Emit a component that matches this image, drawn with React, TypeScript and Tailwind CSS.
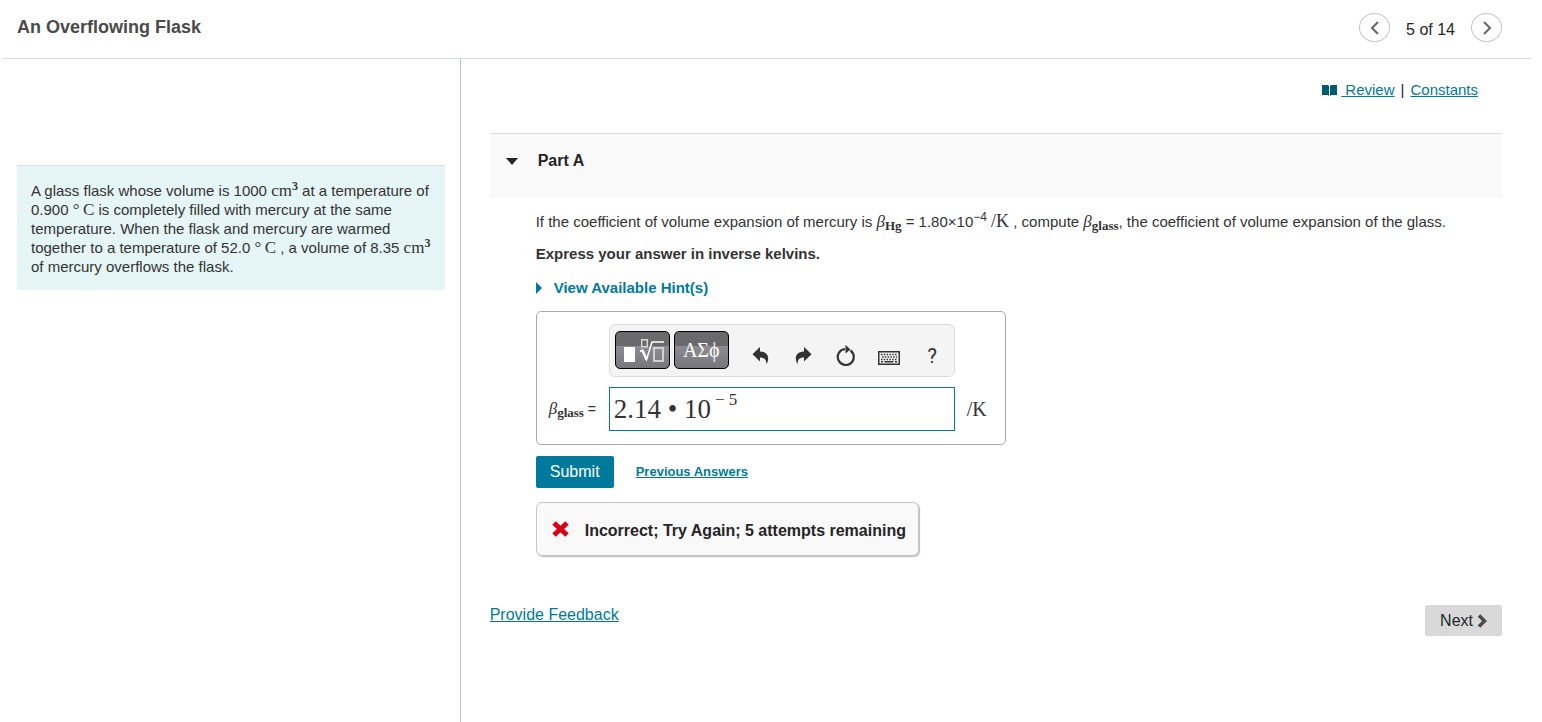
import React, { useState } from 'react'

const link = 'text-[#007a9c] underline'
const math = 'font-["Liberation_Serif",serif] leading-none'

function Unit({ children, sup }: { children: React.ReactNode; sup?: string }) {
  return (
    <span className={`${math} text-[17px] whitespace-nowrap`}>
      {children}
      {sup && <sup className="text-xs leading-none font-bold">{sup}</sup>}
    </span>
  )
}

function Beta({ sub }: { sub: string }) {
  return (
    <span className={`${math} text-[17px] whitespace-nowrap`}>
      <i>β</i>
      <sub className="text-[13px] leading-none font-bold">{sub}</sub>
    </span>
  )
}

function ToolButton({ label, children }: { label: string; children: React.ReactNode }) {
  return (
    <button type="button" aria-label={label} className="flex h-8 w-[43px] items-center justify-center text-[#333]">
      {children}
    </button>
  )
}

function Header() {
  const round = 'flex h-[29px] w-[31px] items-center justify-center rounded-[50%] border border-[#c7c7c7] text-[#666]'
  return (
    <header className="flex h-[59px] items-start justify-between border-b border-[#dcdcdc] pr-[29px] pl-[15px]">
      <h1 className="pt-[15px] text-lg leading-6 font-bold text-[#4a4a4a]">An Overflowing Flask</h1>
      <nav className="flex items-start pt-[13px] text-base text-[#252525]">
        <button type="button" aria-label="Previous item" className={round}>
          <svg width="10" height="14" viewBox="0 0 10 14" fill="none" stroke="currentColor" strokeWidth="2">
            <path d="M8 1 2 7l6 6" />
          </svg>
        </button>
        <span className="px-4 pt-[5px] leading-6">5 of 14</span>
        <button type="button" aria-label="Next item" className={round}>
          <svg width="10" height="14" viewBox="0 0 10 14" fill="none" stroke="currentColor" strokeWidth="2">
            <path d="m2 1 6 6-6 6" />
          </svg>
        </button>
      </nav>
    </header>
  )
}

function Problem() {
  return (
    <aside className="w-[30%] shrink-0 border-r border-[#b3c6d9] px-[15px] pt-[106px]">
      <div className="border-t border-[#dcdcdc] bg-[#e6f6f6] pt-[15px] pr-2 pb-[14px] pl-[14px] text-[15px] leading-[19px] text-[#333]">
        A glass flask whose volume is 1000 <Unit sup="3">cm</Unit> at a temperature of 0.900{' '}
        <Unit>°&thinsp;C</Unit> is completely filled with mercury at the same temperature. When the flask and mercury
        are warmed together to a temperature of 52.0 <Unit>°&thinsp;C</Unit> , a volume of 8.35{' '}
        <Unit sup="3">cm</Unit> of mercury overflows the flask.
      </div>
    </aside>
  )
}

function Toolbar() {
  const dark =
    'flex h-[38px] w-[55px] shrink-0 items-center justify-center rounded-[5px] border border-black bg-linear-to-b from-[#6a6a6c] from-40% via-[#8c8b93] via-40% to-[#77777c] text-white'
  return (
    <div className="flex h-[53px] items-start rounded-md border border-[#dcdcdc] bg-[#f4f4f4] px-[5px] pt-[6px]">
      <button type="button" aria-label="Templates" className={dark}>
        <svg width="44" height="26" viewBox="0 0 44 26" fill="none" stroke="#fff" className="shrink-0">
          <rect x="4" y="10" width="11" height="15" fill="#fff" stroke="none" />
          <rect x="21.750" y="2.750" width="5.500" height="7" stroke="#ddd" strokeWidth="1.400" />
          <path d="m20 14.500 2.500-1.500 4 9.500 5.500-17.500h13" strokeWidth="1.500" />
          <path d="m22.500 13.500 4 9" strokeWidth="2.400" />
          <rect x="34" y="11" width="9" height="13" stroke="#ddd" strokeWidth="1.700" />
        </svg>
      </button>
      <button type="button" aria-label="Symbols" className={`${dark} ml-1 ${math} text-xl`}>
        ΑΣϕ
      </button>
      <div className="flex pt-[9px] pl-[10px]">
        <ToolButton label="Undo">
          <svg width="17" height="18" viewBox="0 0 16 18" fill="currentColor">
            <path d="M7.500 0v4.500c6 0 9 4 8 8.500-.2 1.600-.8 3-1.700 4 .3-4-1.300-6.500-6.300-6.500v4L0 7.300z" />
          </svg>
        </ToolButton>
        <ToolButton label="Redo">
          <svg width="17" height="18" viewBox="0 0 16 18" fill="currentColor">
            <path d="M8.500 0v4.500c-6 0-9 4-8 8.500.2 1.600.8 3 1.700 4-.3-4 1.300-6.500 6.300-6.500v4L16 7.300z" />
          </svg>
        </ToolButton>
        <ToolButton label="Reset">
          <svg width="20" height="22" viewBox="0 0 20 22" fill="none" stroke="currentColor" strokeWidth="2.200">
            <path d="M14.500 5.500A8 8 0 1 1 9 4" />
            <path d="m9.500 0 5 4.500-5 4z" fill="currentColor" stroke="none" />
          </svg>
        </ToolButton>
        <ToolButton label="Keyboard">
          <svg width="22" height="20" viewBox="0 0 22 20" fill="none" stroke="currentColor">
            <rect x=".75" y="5.750" width="20.500" height="12.500" strokeWidth="1.500" />
            <path d="M3 8.500h16M4 11h15M3 13.500h16" strokeWidth="1.400" strokeDasharray="1.500 1.300" />
            <path d="M3 15.800h2M6.500 15.800h9M17 15.800h2" strokeWidth="1.400" />
          </svg>
        </ToolButton>
        <ToolButton label="Help">
          <span className="font-['Roboto',sans-serif] text-xl">?</span>
        </ToolButton>
      </div>
    </div>
  )
}

function AnswerBox() {
  const [base, setBase] = useState('2.14 • 10')
  const [exponent, setExponent] = useState('− 5')

  return (
    <div className="w-fit rounded-[5px] border border-[#a9a9a9] pt-3 pr-[18px] pb-[13px] pl-3">
      <div className="grid grid-cols-[60px_346px_auto] items-center gap-y-[10px]">
        <div className="col-start-2">
          <Toolbar />
        </div>
        <label htmlFor="answer" className="col-start-1 text-sm">
          <Beta sub="glass" /> =
        </label>
        <div className="flex h-11 items-center border border-[#007a9c] bg-white px-1 font-['Liberation_Serif',serif] text-[#333]">
          <input
            id="answer"
            type="text"
            value={base}
            onChange={(e) => setBase(e.target.value)}
            className="field-sizing-content text-[27px] outline-none"
          />
          <input
            type="text"
            aria-label="Exponent"
            value={exponent}
            onChange={(e) => setExponent(e.target.value)}
            className="min-w-0 flex-1 pb-[18px] pl-1 text-[17px] leading-5 outline-none"
          />
        </div>
        <span className={`${math} pl-3 text-xl`}>/K</span>
      </div>
    </div>
  )
}

function PartA() {
  return (
    <section>
      <h2 className="flex h-[65px] items-start border-t border-[#dcdcdc] bg-[#f9f9f9] pt-[15px] pl-4 text-base leading-6 font-bold text-[#252525]">
        <button type="button" className="flex items-center gap-5">
          <svg width="12" height="7" viewBox="0 0 12 7" fill="currentColor">
            <path d="M0 0h12L6 7z" />
          </svg>
          Part A
        </button>
      </h2>
      <div className="pt-3 pl-[46px] text-[15px] leading-6 text-[#333]">
        <p>
          If the coefficient of volume expansion of mercury is <Beta sub="Hg" /> = 1.80×10
          <sup className="text-xs leading-none">−4</sup> <span className={`${math} text-lg`}>/K</span> , compute{' '}
          <Beta sub="glass" />, the coefficient of volume expansion of the glass.
        </p>
        <p className="pt-2 font-bold">Express your answer in inverse kelvins.</p>
        <button type="button" className="mt-[10px] flex items-center gap-3 font-bold text-[#007a9c]">
          <svg width="6" height="12" viewBox="0 0 6 12" fill="currentColor">
            <path d="M0 0v12l6-6z" />
          </svg>
          View Available Hint(s)
        </button>
        <form className="pt-[11px]" onSubmit={(e) => e.preventDefault()}>
          <AnswerBox />
          <div className="flex items-center gap-[22px] pt-[11px]">
            <button type="submit" className="h-8 w-[78px] rounded-xs bg-[#007a9c] text-base text-white">
              Submit
            </button>
            <a href="#answers" className={`${link} text-[13px] font-bold`}>
              Previous Answers
            </a>
          </div>
        </form>
        <div
          role="status"
          className="mt-[14px] flex h-[54px] w-fit items-center gap-4 rounded-md border border-[#c7c7c7] bg-[#f9f9f9] pr-3 pl-[15px] text-base font-bold text-[#252525] shadow-[1px_1px_1px_#bbb]"
        >
          <svg width="17" height="16" viewBox="0 0 17 16" fill="none" stroke="#d9001b" strokeWidth="5">
            <path d="m2 2 13 12M15 2 2 14" />
          </svg>
          <span className="pt-1">Incorrect; Try Again; 5 attempts remaining</span>
        </div>
      </div>
    </section>
  )
}

export default function App() {
  return (
    <div className="mr-[11px] ml-[2px] flex min-h-screen flex-col bg-white font-['Liberation_Sans',Arial,sans-serif]">
      <Header />
      <div className="flex flex-1">
        <Problem />
        <main className="min-w-0 flex-1 px-[29px] pt-5">
          <div className="flex items-center justify-end pr-6 pb-8 text-[15px] leading-[22px] text-[#252525]">
            <svg width="15" height="11" viewBox="0 0 15 11" className="mr-1" fill="#005a70">
              <path d="M0 0h6l1 1v10l-1-1H0zM15 0H9L8 1v10l1-1h6z" />
            </svg>
            <a href="#review" className={`${link} whitespace-pre`}>
              {' Review'}
            </a>
            <span className="px-[6px]">|</span>
            <a href="#constants" className={link}>
              Constants
            </a>
          </div>
          <PartA />
          <footer className="flex items-start justify-between pt-[49px] text-base leading-5">
            <a href="#feedback" className={link}>
              Provide Feedback
            </a>
            <button type="button" className="flex h-[31px] items-center gap-1 rounded-xs bg-[#d9d9d9] px-[15px] text-[#252525]">
              Next
              <svg width="10" height="14" viewBox="0 0 10 14" fill="none" stroke="#4a4a4a" strokeWidth="3.500">
                <path d="m2 1.500 5.500 5.500L2 12.500" />
              </svg>
            </button>
          </footer>
        </main>
      </div>
    </div>
  )
}
